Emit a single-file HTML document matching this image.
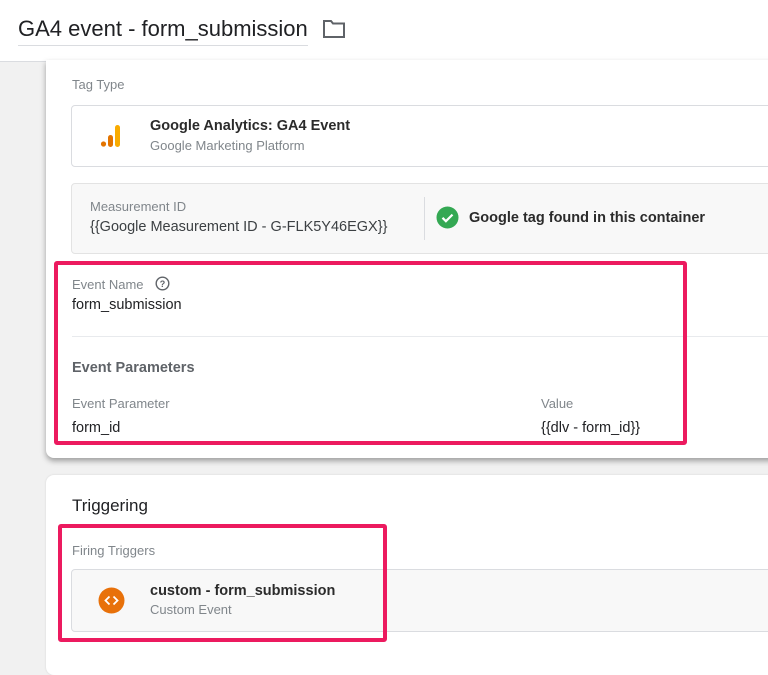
<!DOCTYPE html>
<html><head><style>
*{margin:0;padding:0;box-sizing:border-box}
body{width:768px;height:649px;overflow:hidden;background:#f1f1f1;font-family:"Liberation Sans",sans-serif;position:relative;color:#202124}
.a{position:absolute}
.hdr{left:0;top:0;width:768px;height:62px;background:#fff;border-bottom:1px solid #dadce0}
.card{background:#fff;border-radius:8px}
.lbl{font-size:13px;color:#80868b}
.pink{border:4px solid #ec1a5f;border-radius:3px}
b{font-weight:bold;color:#2b2b2b}
</style></head><body>
<div class="a hdr"></div>
<div class="a" style="left:18px;top:16px;font-size:22px;color:#202124">GA4 event - form_submission</div>
<div class="a" style="left:18px;top:45px;width:290px;height:1px;background:#dadce0"></div>
<svg class="a" style="left:322px;top:19px" width="24" height="20" viewBox="0 0 24 20"><path d="M2 2h7l2 2.5h11v13.5H2z" fill="none" stroke="#5f6368" stroke-width="2"/></svg>

<div class="a card" style="left:46px;top:60px;width:740px;height:398px;border-radius:0 0 8px 8px;box-shadow:0 3px 6px rgba(0,0,0,.35)"></div>
<div class="a lbl" style="left:72px;top:77px">Tag Type</div>
<div class="a" style="left:71px;top:105px;width:720px;height:62px;border:1px solid #dadce0;border-radius:4px;background:#fff"></div>
<svg class="a" style="left:100px;top:123px" width="24" height="26"><circle cx="3.5" cy="21" r="2.6" fill="#e37400"/><rect x="8" y="12" width="5" height="12" rx="2.5" fill="#e37400"/><rect x="15" y="2" width="5" height="22" rx="2.5" fill="#f9ab00"/></svg>
<div class="a" style="left:150px;top:118px;font-size:14.5px"><b>Google Analytics: GA4 Event</b></div>
<div class="a lbl" style="left:150px;top:138px;font-size:13px">Google Marketing Platform</div>

<div class="a" style="left:71px;top:183px;width:720px;height:71px;border:1px solid #e3e3e3;border-radius:4px;background:#f8f8f8"></div>
<div class="a lbl" style="left:90px;top:199px">Measurement ID</div>
<div class="a" style="left:90px;top:219px;font-size:14.5px;color:#3c4043">{{Google Measurement ID - G-FLK5Y46EGX}}</div>
<div class="a" style="left:424px;top:197px;width:1px;height:43px;background:#dadce0"></div>
<svg class="a" style="left:436px;top:206px" width="23" height="23"><circle cx="11.5" cy="11.5" r="11" fill="#34a853"/><path d="M6.5 11.8l3.4 3.4 6.6-6.6" fill="none" stroke="#fff" stroke-width="2.2"/></svg>
<div class="a" style="left:469px;top:210px;font-size:14.5px"><b>Google tag found in this container</b></div>

<div class="a lbl" style="left:72px;top:277px">Event Name</div>
<svg class="a" style="left:155px;top:276px" width="15" height="15"><circle cx="7.5" cy="7.5" r="6.3" fill="none" stroke="#5f6368" stroke-width="1.4"/><text x="7.5" y="11" font-size="9" text-anchor="middle" fill="#5f6368" font-family="Liberation Sans" font-weight="bold">?</text></svg>
<div class="a" style="left:72px;top:297px;font-size:14.5px">form_submission</div>
<div class="a" style="left:72px;top:336px;width:700px;height:1px;background:#e8eaed"></div>
<div class="a" style="left:72px;top:360px;font-size:14.5px;color:#5f6368;font-weight:bold">Event Parameters</div>
<div class="a lbl" style="left:72px;top:396px">Event Parameter</div>
<div class="a lbl" style="left:541px;top:396px">Value</div>
<div class="a" style="left:72px;top:420px;font-size:14.5px">form_id</div>
<div class="a" style="left:541px;top:420px;font-size:14.5px">{{dlv - form_id}}</div>
<div class="a pink" style="left:54px;top:261px;width:633px;height:184px"></div>

<div class="a card" style="left:46px;top:475px;width:740px;height:200px;box-shadow:0 0 2px rgba(0,0,0,.12)"></div>
<div class="a" style="left:72px;top:496px;font-size:17px">Triggering</div>
<div class="a lbl" style="left:72px;top:543px">Firing Triggers</div>
<div class="a" style="left:71px;top:569px;width:720px;height:63px;border:1px solid #dadce0;border-radius:4px;background:#f8f8f8"></div>
<svg class="a" style="left:98px;top:587px" width="27" height="27"><circle cx="13.5" cy="13.5" r="13" fill="#e8710a"/><path d="M11.5 9.5l-4 4 4 4M15.5 9.5l4 4-4 4" fill="none" stroke="#fff" stroke-width="1.8"/></svg>
<div class="a" style="left:150px;top:583px;font-size:14.5px"><b>custom - form_submission</b></div>
<div class="a lbl" style="left:150px;top:602px;font-size:13px">Custom Event</div>
<div class="a pink" style="left:58px;top:524px;width:329px;height:118px"></div>
</body></html>
